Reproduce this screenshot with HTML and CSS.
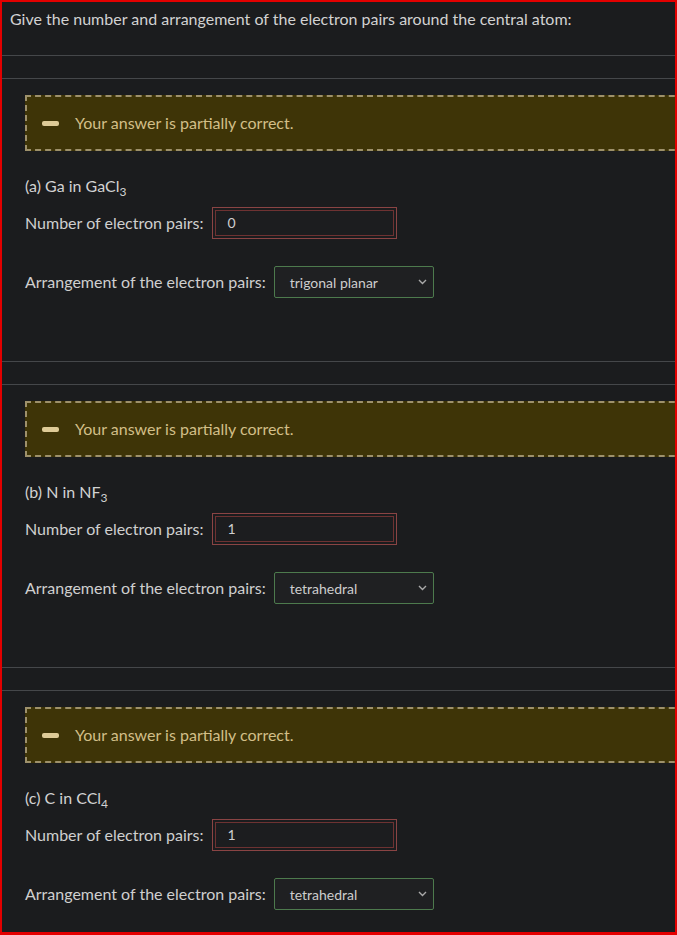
FILE: index.html
```html
<!DOCTYPE html>
<html>
<head>
<meta charset="utf-8">
<link rel="stylesheet" href="styles.css">
</head>
<body>
<div class="frame">
  <div class="header">
    <p class="title">Give the number and arrangement of the electron pairs around the central atom:</p>
  </div>

  <div class="part">
    <div class="alert">
      <span class="minus"></span>
      <span class="alert-text">Your answer is partially correct.</span>
    </div>
    <p class="part-label">(a) Ga in GaCl<sub>3</sub></p>
    <div class="row row-num">
      <span class="label">Number of electron pairs:</span>
      <div class="input-wrap"><div class="input">0</div></div>
    </div>
    <div class="row row-sel">
      <span class="label">Arrangement of the electron pairs:</span>
      <div class="select"><span>trigonal planar</span><svg class="chev" width="9" height="6" viewBox="0 0 9 6"><path d="M1 1 L4.5 4.5 L8 1" fill="none" stroke="#a9a9a9" stroke-width="1.4"/></svg></div>
    </div>
  </div>

  <div class="part">
    <div class="alert">
      <span class="minus"></span>
      <span class="alert-text">Your answer is partially correct.</span>
    </div>
    <p class="part-label">(b) N in NF<sub>3</sub></p>
    <div class="row row-num">
      <span class="label">Number of electron pairs:</span>
      <div class="input-wrap"><div class="input">1</div></div>
    </div>
    <div class="row row-sel">
      <span class="label">Arrangement of the electron pairs:</span>
      <div class="select"><span>tetrahedral</span><svg class="chev" width="9" height="6" viewBox="0 0 9 6"><path d="M1 1 L4.5 4.5 L8 1" fill="none" stroke="#a9a9a9" stroke-width="1.4"/></svg></div>
    </div>
  </div>

  <div class="part">
    <div class="alert">
      <span class="minus"></span>
      <span class="alert-text">Your answer is partially correct.</span>
    </div>
    <p class="part-label">(c) C in CCl<sub>4</sub></p>
    <div class="row row-num">
      <span class="label">Number of electron pairs:</span>
      <div class="input-wrap"><div class="input">1</div></div>
    </div>
    <div class="row row-sel">
      <span class="label">Arrangement of the electron pairs:</span>
      <div class="select"><span>tetrahedral</span><svg class="chev" width="9" height="6" viewBox="0 0 9 6"><path d="M1 1 L4.5 4.5 L8 1" fill="none" stroke="#a9a9a9" stroke-width="1.4"/></svg></div>
    </div>
  </div>
</div>
</body>
</html>
```

FILE: styles.css
```css
html, body {
  margin: 0;
  padding: 0;
  background: #1b1c1e;
}

.frame {
  box-sizing: border-box;
  width: 677px;
  height: 935px;
  border: 2px solid #e30000;
  border-bottom-width: 3px;
  overflow: hidden;
  background: #1b1c1e;
  font-family: Lato, "Open Sans", sans-serif;
  color: #d2d2d2;
  font-size: 16px;
}

.header {
  box-sizing: border-box;
  height: 54px;
  border-bottom: 1px solid #45474a;
  padding: 7px 0 0 8px;
}

.title {
  margin: 0;
  line-height: 20px;
}

.part {
  margin-top: 22px;
  border-top: 1px solid #45474a;
  border-bottom: 1px solid #45474a;
  padding: 16px 0 63px 23px;
}

.alert {
  box-sizing: border-box;
  height: 56px;
  margin-right: -40px;
  border: 2px dashed #9e916b;
  background: #3e3407;
  display: flex;
  align-items: center;
  padding-left: 15px;
}

.minus {
  display: block;
  width: 17px;
  height: 5px;
  border-radius: 2px;
  background: #decb97;
}

.alert-text {
  margin-left: 16px;
  color: #d2bf88;
  line-height: 20px;
}

.part-label {
  margin: 25px 0 0 0;
  line-height: 20px;
  color: #d2d2d2;
}

.part-label sub {
  font-size: 12px;
  vertical-align: -4px;
  line-height: 0;
}

.row {
  display: flex;
  align-items: center;
  gap: 8px;
}

.row-num {
  margin-top: 11px;
}

.row-sel {
  margin-top: 27px;
}

.label {
  line-height: 20px;
  color: #cfcfcf;
}

.input-wrap {
  box-sizing: border-box;
  width: 185px;
  height: 32px;
  border: 1px solid #8a4444;
  padding: 2px;
}

.input {
  box-sizing: border-box;
  height: 100%;
  border: 1px solid #6e3232;
  background: #1c1d1f;
  padding-left: 12px;
  font-size: 14px;
  line-height: 24px;
  color: #cfcfcf;
}

.select {
  box-sizing: border-box;
  width: 160px;
  height: 32px;
  border: 1px solid #4d7a4d;
  border-radius: 2px;
  background: #1f2022;
  display: flex;
  align-items: center;
  justify-content: space-between;
  padding: 0 6px 0 15px;
  font-size: 14px;
  color: #cdcdcd;
}

.chev {
  display: block;
}
```
